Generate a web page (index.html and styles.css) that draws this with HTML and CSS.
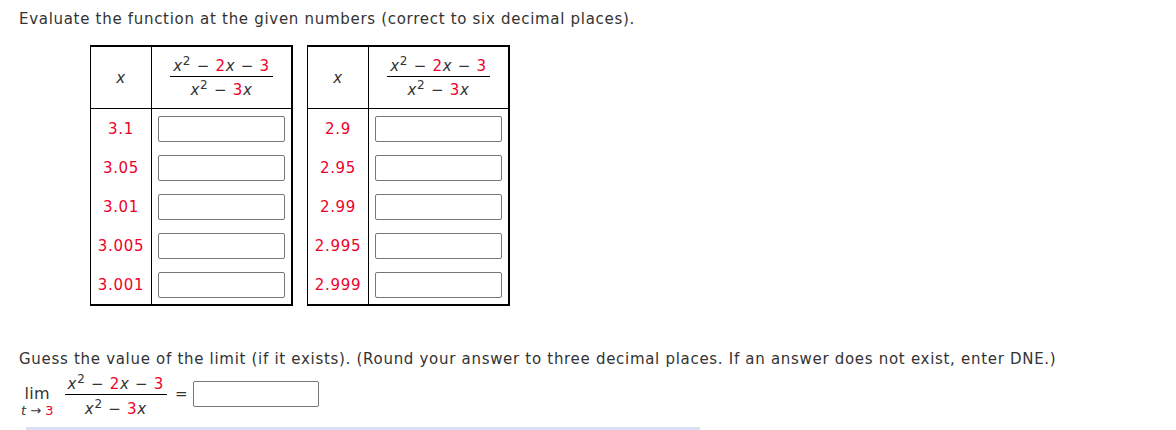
FILE: index.html
```html
<!DOCTYPE html>
<html>
<head>
<meta charset="utf-8">
<link rel="stylesheet" href="styles.css">
</head>
<body>
<div class="page">
  <p class="intro">Evaluate the function at the given numbers (correct to six decimal places).</p>
  <div class="tables">
    <table class="vals">
      <tr class="head">
        <th class="xcol"><i>x</i></th>
        <th class="fcol">
          <span class="frac">
            <span class="num"><i>x</i><sup>2</sup> − <span class="r">2</span><i>x</i> − <span class="r">3</span></span>
            <span class="den"><i>x</i><sup>2</sup> − <span class="r">3</span><i>x</i></span>
          </span>
        </th>
      </tr>
      <tr><td class="xv">3.1</td><td class="iv"><span class="box"></span></td></tr>
      <tr><td class="xv">3.05</td><td class="iv"><span class="box"></span></td></tr>
      <tr><td class="xv">3.01</td><td class="iv"><span class="box"></span></td></tr>
      <tr><td class="xv">3.005</td><td class="iv"><span class="box"></span></td></tr>
      <tr><td class="xv">3.001</td><td class="iv"><span class="box"></span></td></tr>
    </table>
    <table class="vals">
      <tr class="head">
        <th class="xcol"><i>x</i></th>
        <th class="fcol">
          <span class="frac">
            <span class="num"><i>x</i><sup>2</sup> − <span class="r">2</span><i>x</i> − <span class="r">3</span></span>
            <span class="den"><i>x</i><sup>2</sup> − <span class="r">3</span><i>x</i></span>
          </span>
        </th>
      </tr>
      <tr><td class="xv">2.9</td><td class="iv"><span class="box"></span></td></tr>
      <tr><td class="xv">2.95</td><td class="iv"><span class="box"></span></td></tr>
      <tr><td class="xv">2.99</td><td class="iv"><span class="box"></span></td></tr>
      <tr><td class="xv">2.995</td><td class="iv"><span class="box"></span></td></tr>
      <tr><td class="xv">2.999</td><td class="iv"><span class="box"></span></td></tr>
    </table>
  </div>
  <p class="guess">Guess the value of the limit (if it exists). (Round your answer to three decimal places. If an answer does not exist, enter DNE.)</p>
  <div class="limrow">
    <span class="lim"><span class="limword">lim</span><span class="limsub"><i>t</i> → <span class="r">3</span></span></span>
    <span class="frac lfrac">
      <span class="num"><i>x</i><sup>2</sup> − <span class="r">2</span><i>x</i> − <span class="r">3</span></span>
      <span class="den"><i>x</i><sup>2</sup> − <span class="r">3</span><i>x</i></span>
    </span>
    <span class="eq">=</span>
    <span class="box"></span>
  </div>
  <div class="bar"></div>
</div>
</body>
</html>
```
FILE: styles.css
```css
html, body {
  margin: 0;
  padding: 0;
  background: #fff;
}
body {
  font-family: "DejaVu Sans", Verdana, sans-serif;
  font-size: 15px;
  letter-spacing: 0.7px;
  color: #333;
}
.page {
  padding: 10px 0 0 19px;
}
.intro {
  margin: 0;
  line-height: 18px;
}
.tables {
  display: flex;
  gap: 14px;
  margin: 17px 0 0 71px;
}
.vals {
  border-collapse: collapse;
  border-top: 2px solid #000;
  border-right: 2px solid #000;
  border-bottom: 2px solid #000;
  border-left: 1px solid #000;
}
.vals th, .vals td {
  padding: 0;
  font-weight: normal;
}
.head th {
  height: 61px;
  border-bottom: 1px solid #000;
}
.xcol {
  width: 60px;
  border-right: 1px solid #000;
  text-align: center;
}
.fcol {
  width: 139px;
  text-align: center;
}
.xv {
  height: 39px;
  text-align: center;
  color: #f0002a;
  border-right: 1px solid #000;
}
.iv {
  text-align: center;
}
.box {
  display: inline-block;
  width: 125px;
  height: 24px;
  border: 1px solid #777;
  border-radius: 2px;
  vertical-align: middle;
  background: #fff;
}
.r { color: #f0002a; }
i { font-style: italic; }
sup {
  font-size: 12px;
  vertical-align: 6px;
  line-height: 0;
}
.frac {
  display: inline-flex;
  flex-direction: column;
  align-items: center;
  vertical-align: middle;
}
.frac .num {
  padding: 0 3px 1px;
  line-height: 18px;
}
.frac .den {
  align-self: stretch;
  border-top: 1px solid #000;
  padding-top: 4px;
  line-height: 18px;
  text-align: center;
}
.guess {
  margin: 44px 0 0;
  line-height: 18px;
}
.limrow {
  display: flex;
  align-items: flex-start;
  margin: 13px 0 0 2px;
  height: 38px;
}
.lim {
  display: inline-flex;
  flex-direction: column;
  align-items: center;
  margin-top: 4px;
}
.limword {
  font-size: 16px;
  line-height: 18px;
  letter-spacing: 0.3px;
}
.limsub {
  font-size: 13px;
  line-height: 16px;
  letter-spacing: 0;
}
.lfrac {
  margin-left: 11px;
  margin-top: -6px;
}
.lfrac .den {
  padding-top: 5px;
}
.eq {
  margin: 4px 5px 0 8px;
  line-height: 18px;
}
.limrow .box {
  width: 124px;
  height: 24px;
}
.bar {
  margin: 8px 0 0 7px;
  width: 674px;
  height: 6px;
  background: #dae0f6;
}
```
